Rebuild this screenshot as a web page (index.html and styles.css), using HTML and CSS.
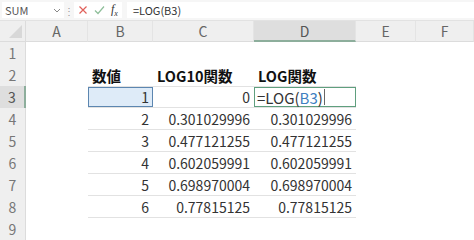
FILE: index.html
```html
<!DOCTYPE html>
<html lang="ja">

<head>
  <meta charset="UTF-8">
  <title>LOG関数</title>
  <link rel="stylesheet" href="styles.css">
</head>

<body>
  <div class="formula-bar">
    <div class="name-box">
      <span>SUM</span>
      <svg class="chevron" width="8" height="5" viewBox="0 0 8 5"><path d="M1 1l3 3 3-3" fill="none" stroke="#888" stroke-width="1"/></svg>
    </div>
    <div class="dots">⋮</div>
    <div class="fx-buttons">
      <svg width="10" height="10" viewBox="0 0 10 10"><path d="M1.5 1.5l7 7M8.5 1.5l-7 7" stroke="#e0605a" stroke-width="1.2"/></svg>
      <svg width="11" height="10" viewBox="0 0 11 10"><path d="M1 5.5l3 3L10 1.5" fill="none" stroke="#8fbf9a" stroke-width="1.2"/></svg>
      <span class="fx">f<sub>x</sub></span>
    </div>
    <div class="formula-input">=LOG(B3)</div>
  </div>

  <div class="sheet">
    <div class="corner"><span class="tri"></span></div>
    <div class="col-head">A</div>
    <div class="col-head">B</div>
    <div class="col-head">C</div>
    <div class="col-head active">D</div>
    <div class="col-head">E</div>
    <div class="col-head">F</div>

    <div class="row-head">1</div>
    <div class="cell"></div><div class="cell"></div><div class="cell"></div><div class="cell"></div><div class="cell"></div><div class="cell"></div>

    <div class="row-head">2</div>
    <div class="cell"></div>
    <div class="cell title">数値</div>
    <div class="cell title">LOG10関数</div>
    <div class="cell title">LOG関数</div>
    <div class="cell"></div><div class="cell"></div>

    <div class="row-head active">3</div>
    <div class="cell"></div>
    <div class="cell num data first selected">1</div>
    <div class="cell num data first">0</div>
    <div class="cell data first editing">=LOG(<span class="ref">B3</span>)<span class="caret"></span></div>
    <div class="cell"></div><div class="cell"></div>

    <div class="row-head">4</div>
    <div class="cell"></div>
    <div class="cell num data">2</div>
    <div class="cell num data">0.301029996</div>
    <div class="cell num data">0.301029996</div>
    <div class="cell"></div><div class="cell"></div>

    <div class="row-head">5</div>
    <div class="cell"></div>
    <div class="cell num data">3</div>
    <div class="cell num data">0.477121255</div>
    <div class="cell num data">0.477121255</div>
    <div class="cell"></div><div class="cell"></div>

    <div class="row-head">6</div>
    <div class="cell"></div>
    <div class="cell num data">4</div>
    <div class="cell num data">0.602059991</div>
    <div class="cell num data">0.602059991</div>
    <div class="cell"></div><div class="cell"></div>

    <div class="row-head">7</div>
    <div class="cell"></div>
    <div class="cell num data">5</div>
    <div class="cell num data">0.698970004</div>
    <div class="cell num data">0.698970004</div>
    <div class="cell"></div><div class="cell"></div>

    <div class="row-head">8</div>
    <div class="cell"></div>
    <div class="cell num data">6</div>
    <div class="cell num data">0.77815125</div>
    <div class="cell num data">0.77815125</div>
    <div class="cell"></div><div class="cell"></div>

    <div class="row-head">9</div>
    <div class="cell"></div><div class="cell"></div><div class="cell"></div><div class="cell"></div><div class="cell"></div><div class="cell"></div>
  </div>
</body>

</html>
```

FILE: styles.css
```css
body {
  margin: 0;
  background: #fff;
  font-family: "Noto Sans CJK JP", "Noto Sans", sans-serif;
  color: #222;
  overflow: hidden;
}

/* formula bar */
.formula-bar {
  display: flex;
  align-items: center;
  height: 21px;
  background: #f6f6f6;
  border-bottom: 1px solid #e2e2e2;
  box-sizing: border-box;
  font-size: 11px;
}

.name-box {
  display: flex;
  align-items: center;
  justify-content: space-between;
  width: 56px;
  height: 16px;
  margin-left: 2px;
  padding: 0 3px;
  background: #fff;
  color: #555;
}

.chevron {
  margin-top: 1px;
}

.dots {
  width: 10px;
  text-align: center;
  color: #999;
  font-size: 10px;
}

.fx-buttons {
  display: flex;
  align-items: center;
  gap: 6px;
  height: 16px;
  padding: 0 4px;
  background: #fff;
}

.fx {
  font-family: "Liberation Serif", serif;
  font-style: italic;
  font-size: 12px;
  color: #333;
}

.fx sub {
  font-size: 8px;
}

.formula-input {
  flex: 1;
  height: 16px;
  margin-left: 5px;
  padding-left: 6px;
  line-height: 16px;
  background: #fff;
  color: #333;
}

/* sheet grid */
.sheet {
  display: grid;
  grid-template-columns: 26px 62px 65px 101px 102px 60px 1fr;
  grid-template-rows: 21px repeat(9, 22px);
}

.corner {
  position: relative;
  background: #efefef;
  border-right: 1px solid #dcdcdc;
  border-bottom: 1px solid #dcdcdc;
}

.corner .tri {
  position: absolute;
  right: 3px;
  bottom: 3px;
  width: 0;
  height: 0;
  border-style: solid;
  border-width: 0 0 13px 13px;
  border-color: transparent transparent #d8d8d8 transparent;
}

.col-head {
  display: flex;
  align-items: center;
  justify-content: center;
  background: #efefef;
  border-right: 1px solid #e4e4e4;
  border-bottom: 1px solid #dcdcdc;
  color: #666;
  font-size: 14px;
}

.col-head.active {
  background: #dedede;
  border-bottom: 2px solid #8dae9c;
  color: #555;
}

.row-head {
  display: flex;
  align-items: center;
  justify-content: center;
  background: #efefef;
  border-right: 1px solid #dcdcdc;
  color: #777;
  font-size: 14px;
}

.row-head.active {
  background: #dedede;
  border-right: 2px solid #8dae9c;
  color: #555;
}

.cell {
  display: flex;
  align-items: center;
  padding: 0 4px;
  font-size: 14px;
  white-space: nowrap;
  overflow: visible;
}

.cell.title {
  font-weight: bold;
  color: #111;
  font-size: 14.5px;
}

.cell.num {
  justify-content: flex-end;
  color: #333;
}

.cell.data {
  border-bottom: 1px solid #e2e2e2;
}

.cell.data.first {
  border-top: 1px solid #e2e2e2;
}

.cell.selected {
  background: #deebf8;
  box-shadow: inset 0 0 0 1px #5c86b0;
}

.cell.editing {
  padding-left: 3px;
  font-size: 15px;
  color: #333;
  box-shadow: inset 0 0 0 1px #5f9f7e;
}

.ref {
  color: #3f7fc0;
}

.caret {
  width: 1px;
  height: 16px;
  margin-left: 1px;
  background: #666;
}
```
